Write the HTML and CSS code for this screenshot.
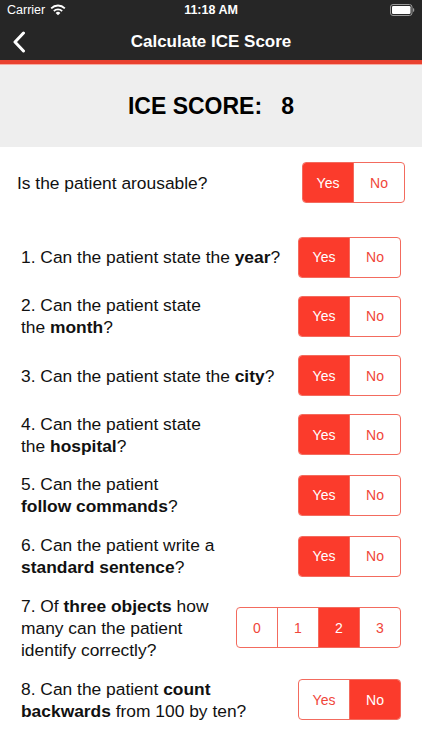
FILE: index.html
```html
<!DOCTYPE html>
<html lang="en">
<head>
    <meta charset="UTF-8">
    <meta name="viewport" content="width=device-width, initial-scale=1.0">
    <title>Calculate ICE Score</title>
    <link rel="stylesheet" href="styles.css">
</head>
<body>
    <div class="status-bar">
        <div class="carrier">
            Carrier
            <svg class="wifi" width="16" height="12" viewBox="0 0 15 11">
                <path d="M7.5 10.5 L5.3 8.2 A3.2 3.2 0 0 1 9.7 8.2 Z" fill="#fff"/>
                <path d="M3.6 6.5 A5.6 5.6 0 0 1 11.4 6.5" stroke="#fff" stroke-width="1.7" fill="none"/>
                <path d="M1.1 3.9 A9.2 9.2 0 0 1 13.9 3.9" stroke="#fff" stroke-width="1.7" fill="none"/>
            </svg>
        </div>
        <div class="time">11:18 AM</div>
        <div class="battery">
            <svg width="25" height="12" viewBox="0 0 25 12">
                <rect x="0.5" y="0.5" width="21.5" height="11" rx="2.5" fill="none" stroke="#9a9a9a"/>
                <rect x="2" y="2" width="18.5" height="8" rx="1.2" fill="#fff"/>
                <path d="M23 4 v4 a1.5 1.5 0 0 0 1.2 -2 a1.5 1.5 0 0 0 -1.2 -2z" fill="#9a9a9a"/>
            </svg>
        </div>
    </div>

    <div class="nav-bar">
        <svg class="back" width="14" height="22" viewBox="0 0 14 22">
            <path d="M11.5 2 L3 11 L11.5 20" stroke="#fff" stroke-width="3" fill="none" stroke-linecap="round" stroke-linejoin="round"/>
        </svg>
        <div class="nav-title">Calculate ICE Score</div>
    </div>

    <div class="score-band">ICE SCORE:&nbsp;&nbsp; 8</div>

    <div class="questions">
        <div class="row first">
            <div class="question">Is the patient arousable?</div>
            <div class="segments">
                <span class="seg active">Yes</span>
                <span class="seg">No</span>
            </div>
        </div>

        <div class="row">
            <div class="question">1. Can the patient state the <b>year</b>?</div>
            <div class="segments">
                <span class="seg active">Yes</span>
                <span class="seg">No</span>
            </div>
        </div>

        <div class="row">
            <div class="question">2. Can the patient state<br>the <b>month</b>?</div>
            <div class="segments">
                <span class="seg active">Yes</span>
                <span class="seg">No</span>
            </div>
        </div>

        <div class="row">
            <div class="question">3. Can the patient state the <b>city</b>?</div>
            <div class="segments">
                <span class="seg active">Yes</span>
                <span class="seg">No</span>
            </div>
        </div>

        <div class="row">
            <div class="question">4. Can the patient state<br>the <b>hospital</b>?</div>
            <div class="segments">
                <span class="seg active">Yes</span>
                <span class="seg">No</span>
            </div>
        </div>

        <div class="row">
            <div class="question">5. Can the patient<br><b>follow commands</b>?</div>
            <div class="segments">
                <span class="seg active">Yes</span>
                <span class="seg">No</span>
            </div>
        </div>

        <div class="row">
            <div class="question">6. Can the patient write a<br><b>standard sentence</b>?</div>
            <div class="segments">
                <span class="seg active">Yes</span>
                <span class="seg">No</span>
            </div>
        </div>

        <div class="row">
            <div class="question">7. Of <b>three objects</b> how<br>many can the patient<br>identify correctly?</div>
            <div class="segments four">
                <span class="seg">0</span>
                <span class="seg">1</span>
                <span class="seg active">2</span>
                <span class="seg">3</span>
            </div>
        </div>

        <div class="row">
            <div class="question">8. Can the patient <b>count</b><br><b>backwards</b> from 100 by ten?</div>
            <div class="segments">
                <span class="seg">Yes</span>
                <span class="seg active">No</span>
            </div>
        </div>
    </div>
</body>
</html>
```

FILE: styles.css
```css
body {
    margin: 0;
    padding: 0;
    font-family: "Liberation Sans", Arial, sans-serif;
    color: #111;
    background-color: #fff;
}
.status-bar {
    height: 20px;
    background-color: #262626;
    color: #fff;
    display: flex;
    align-items: center;
    justify-content: space-between;
    padding: 0 7px;
    font-size: 12.5px;
    position: relative;
}
.carrier {
    display: flex;
    align-items: center;
    gap: 5px;
}
.time {
    position: absolute;
    left: 0;
    right: 0;
    text-align: center;
    font-weight: bold;
    font-size: 12.5px;
}
.battery {
    display: flex;
    align-items: center;
}
.nav-bar {
    height: 40px;
    background-color: #262626;
    border-bottom: 4px solid #e9412f;
    box-shadow: 0 1px 0 #f6aaa1;
    display: flex;
    align-items: center;
    position: relative;
}
.back {
    margin-left: 12px;
    margin-top: 4px;
}
.nav-title {
    position: absolute;
    left: 0;
    right: 0;
    text-align: center;
    color: #fff;
    font-size: 17px;
    font-weight: bold;
    top: 12px;
}
.score-band {
    height: 82px;
    margin-top: 1px;
    background-color: #eeeeee;
    display: flex;
    align-items: center;
    justify-content: center;
    font-size: 23px;
    font-weight: bold;
    color: #000;
}
.questions {
    display: flex;
    flex-direction: column;
    gap: 16.7px;
    padding: 15px 21px 20px 21px;
}
.row {
    display: flex;
    align-items: center;
    justify-content: space-between;
}
.row.first {
    margin: 0 -4px 17px -4px;
}
.question {
    font-size: 17.4px;
    line-height: 22px;
}
.segments {
    display: flex;
    width: 101px;
    height: 39px;
    border: 1px solid #f36b5e;
    border-radius: 4px;
    overflow: hidden;
    flex-shrink: 0;
}
.segments.four {
    width: 163px;
}
.seg {
    flex: 1;
    display: flex;
    align-items: center;
    justify-content: center;
    font-size: 14px;
    color: #f0463a;
    border-left: 1px solid #f36b5e;
}
.seg:first-child {
    border-left: none;
}
.seg.active {
    background-color: #fb3b2c;
    color: #fff;
}
```
